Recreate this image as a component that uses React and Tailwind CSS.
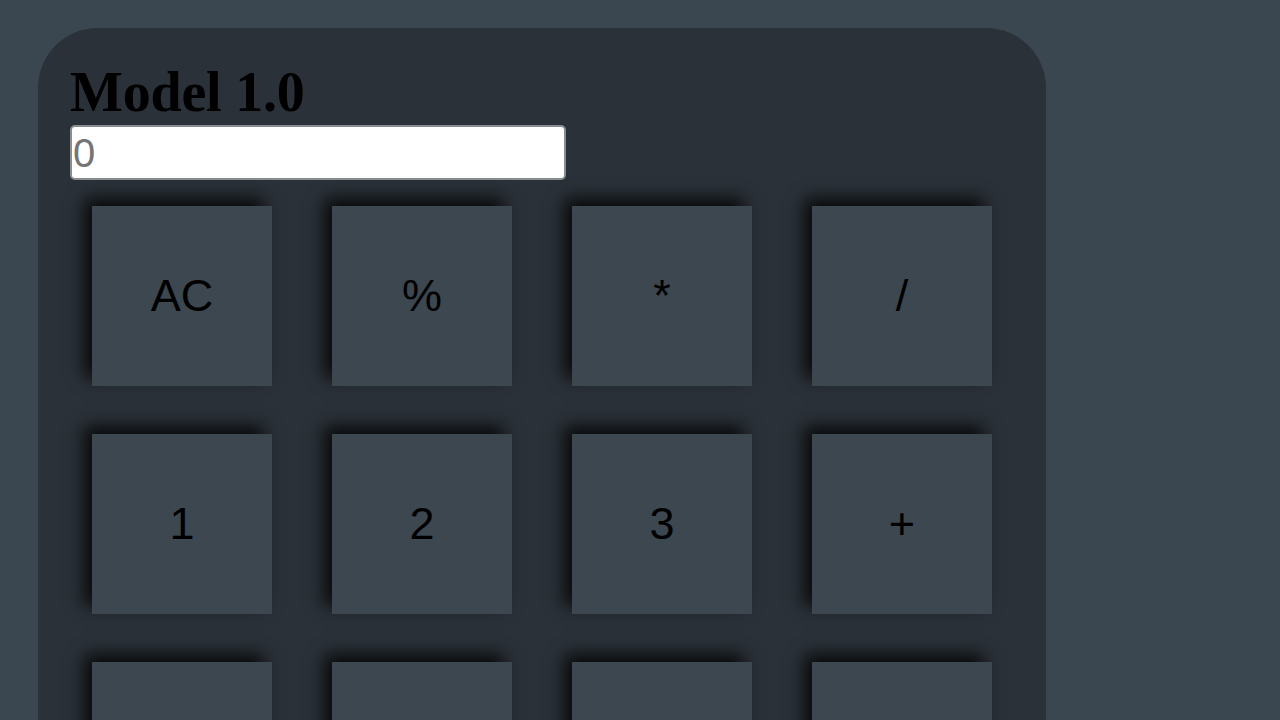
export default function App() {
  const keys = ["AC", "%", "*", "/", "1", "2", "3", "+", "4", "5", "6", "-", "7", "8", "9", "=", "0", ".", "(", ")"];
  return (
    <div className="h-screen overflow-y-scroll bg-[#3b4750]">
      <div className="pt-[28px] pb-[28px] pl-[38px]">
        <div className="w-[1008px] bg-[#2a3138] rounded-[60px] pt-[36px] px-[32px] pb-[56px]">
          <h1 className="text-[56px] leading-[56px] font-bold text-black tracking-[-0.2px]" style={{ fontFamily: '"Liberation Serif", serif' }}>Model 1.0</h1>
          <input
            readOnly
            placeholder="0"
            className="mt-[5px] block w-[496px] h-[55px] bg-white border-2 border-[#8a8d90] rounded-[5px] pl-[1px] text-[40px] placeholder:text-[#757575] outline-none"
            style={{ fontFamily: '"Liberation Sans", Arial, sans-serif' }}
          />
          <div className="mt-[26px] ml-[22px] grid grid-cols-[repeat(4,180px)] gap-x-[60px] gap-y-[48px]">
            {keys.map((k) => (
              <button
                key={k}
                className="w-[180px] h-[180px] bg-[#3c4750] flex items-center justify-center text-[45px] text-black shadow-[-8px_-8px_16px_rgba(0,0,0,0.8)]"
                style={{ fontFamily: '"Liberation Sans", Arial, sans-serif' }}
              >
                {k}
              </button>
            ))}
          </div>
        </div>
      </div>
    </div>
  );
}
